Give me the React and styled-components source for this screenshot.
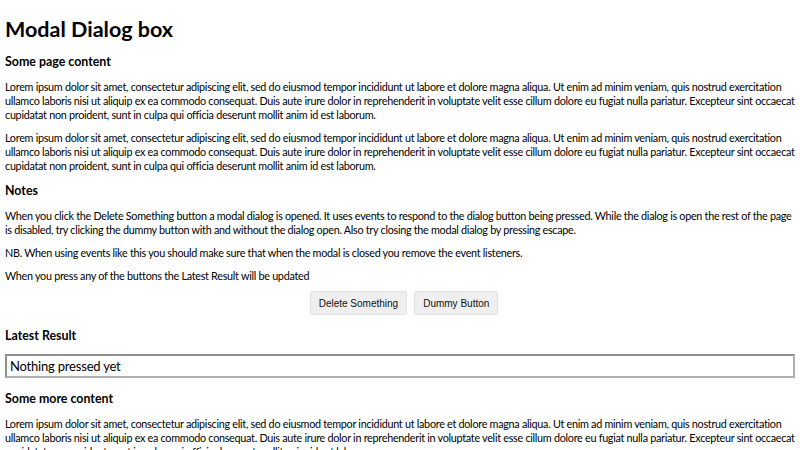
import React from "react";
import styled, { createGlobalStyle } from "styled-components";

const Global = createGlobalStyle`
  html, body { margin: 0; padding: 0; background: #fff; }
  body { font-family: Lato, "Open Sans", sans-serif; color: #000; }
`;

const Page = styled.main`
  padding: 0 5px;
`;

const Title = styled.h1`
  font-size: 21.5px;
  font-weight: 700;
  margin: 14px 0 9px;
  line-height: 30px;
`;

const Heading = styled.h3`
  font-size: 12.4px;
  font-weight: 700;
  margin: 10px 0 10px;
  line-height: 16px;
`;

const Para = styled.p`
  font-size: 10.8px;
  letter-spacing: -0.28px;
  line-height: 14px;
  margin: 0 0 9px;
`;

const ButtonRow = styled.div`
  display: flex;
  justify-content: center;
  gap: 7px;
  padding-left: 8px;
  margin: -1px 0 13px;
`;

const Button = styled.button`
  font-family: "Liberation Sans", Arial, sans-serif;
  font-size: 10px;
  height: 24px;
  padding: 0 8px;
  background: #efefef;
  border: 1px solid #e2e2e2;
  border-radius: 2px;
  color: #111;
`;

const Result = styled.div`
  box-sizing: border-box;
  width: 100%;
  height: 24px;
  border: 2px solid #b0b0b0;
  border-top-color: #909090;
  border-left-color: #909090;
  padding: 1px 3px;
  font-size: 13px;
  letter-spacing: -0.2px;
  line-height: 18px;
  margin: 10px 0 13px;
`;

const lorem =
  "Lorem ipsum dolor sit amet, consectetur adipiscing elit, sed do eiusmod tempor incididunt ut labore et dolore magna aliqua. Ut enim ad minim veniam, quis nostrud exercitation ullamco laboris nisi ut aliquip ex ea commodo consequat. Duis aute irure dolor in reprehenderit in voluptate velit esse cillum dolore eu fugiat nulla pariatur. Excepteur sint occaecat cupidatat non proident, sunt in culpa qui officia deserunt mollit anim id est laborum.";

export default function App() {
  return (
    <Page>
      <Global />
      <Title>Modal Dialog box</Title>
      <Heading>Some page content</Heading>
      <Para>{lorem}</Para>
      <Para>{lorem}</Para>
      <Heading>Notes</Heading>
      <Para>
        When you click the Delete Something button a modal dialog is opened. It uses events to respond to the dialog button being pressed. While the dialog is open the rest of the page is disabled, try clicking the dummy button with and without the dialog open. Also try closing the modal dialog by pressing escape.
      </Para>
      <Para>
        NB. When using events like this you should make sure that when the modal is closed you remove the event listeners.
      </Para>
      <Para>When you press any of the buttons the Latest Result will be updated</Para>
      <ButtonRow>
        <Button>Delete Something</Button>
        <Button>Dummy Button</Button>
      </ButtonRow>
      <Heading>Latest Result</Heading>
      <Result>Nothing pressed yet</Result>
      <Heading>Some more content</Heading>
      <Para>{lorem}</Para>
    </Page>
  );
}
